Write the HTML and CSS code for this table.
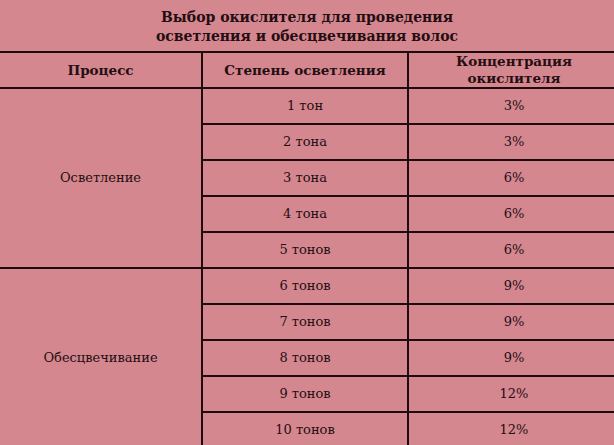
FILE: index.html
```html
<!DOCTYPE html>
<html lang="ru">
<head>
<meta charset="utf-8">
<link rel="stylesheet" href="styles.css">
</head>
<body>
<div class="page">
  <h1 class="title">Выбор окислителя для проведения<br>осветления и обесцвечивания волос</h1>
  <table class="grid">
    <colgroup><col class="c1"><col class="c2"><col class="c3"></colgroup>
    <thead>
      <tr class="head"><th>Процесс</th><th>Степень осветления</th><th>Концентрация<br>окислителя</th></tr>
    </thead>
    <tbody>
      <tr><td rowspan="5">Осветление</td><td>1 тон</td><td>3%</td></tr>
      <tr><td>2 тона</td><td>3%</td></tr>
      <tr><td>3 тона</td><td>6%</td></tr>
      <tr><td>4 тона</td><td>6%</td></tr>
      <tr><td>5 тонов</td><td>6%</td></tr>
      <tr><td rowspan="5">Обесцвечивание</td><td>6 тонов</td><td>9%</td></tr>
      <tr><td>7 тонов</td><td>9%</td></tr>
      <tr><td>8 тонов</td><td>9%</td></tr>
      <tr><td>9 тонов</td><td>12%</td></tr>
      <tr><td>10 тонов</td><td>12%</td></tr>
    </tbody>
  </table>
</div>
</body>
</html>
```
FILE: styles.css
```css
html, body {
  margin: 0;
  padding: 0;
  background: #d4878f;
}
.page {
  width: 614px;
  height: 445px;
  overflow: hidden;
  background: #d4878f;
  color: #240e12;
  font-family: "DejaVu Serif", "Liberation Serif", serif;
}
.title {
  margin: 0;
  height: 51px;
  box-sizing: border-box;
  padding-top: 8px;
  font-size: 14px;
  line-height: 19px;
  font-weight: bold;
  text-align: center;
}
.grid {
  border-collapse: collapse;
  table-layout: fixed;
  width: 620px;
}
.c1 { width: 202px; }
.c2 { width: 206px; }
.c3 { width: 212px; }
.grid th, .grid td {
  border: 2px solid #1e0b0d;
  padding: 0;
  text-align: center;
  vertical-align: middle;
  font-size: 13px;
}
.grid th:first-child, .grid td[rowspan] {
  border-left: none;
}
.grid th {
  font-weight: bold;
  font-size: 13.5px;
  line-height: 17px;
  height: 34px;
}
.grid td {
  height: 34px;
  line-height: 16px;
}
```
